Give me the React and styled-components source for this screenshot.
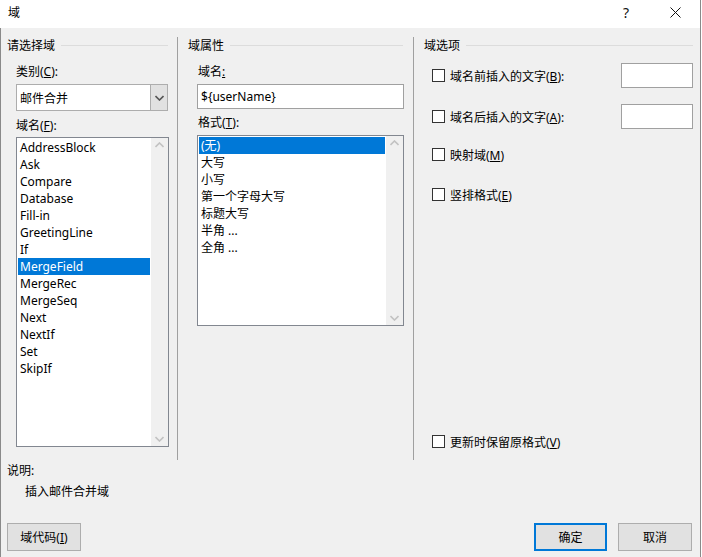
import styled, { createGlobalStyle } from "styled-components";

const GlobalStyle = createGlobalStyle`
  html, body {
    margin: 0;
    padding: 0;
    background: #ffffff;
  }
  body {
    font-family: "Noto Sans", "Noto Sans CJK SC", sans-serif;
    font-size: 12px;
    color: #000;
  }
`;

const Window = styled.div`
  width: 700px;
  height: 557px;
  display: flex;
  flex-direction: column;
  background: #ffffff;
  border-right: 1px solid #8a8a8a;
  overflow: hidden;
`;

const TitleBar = styled.div`
  height: 28px;
  display: flex;
  align-items: center;
  padding-left: 8px;
  background: #ffffff;
  font-size: 12px;
  line-height: 17px;
  padding-bottom: 3px;
  box-sizing: border-box;
`;

const Title = styled.div`
  flex: 1;
`;

const TitleButton = styled.div`
  width: ${(p) => p.$w}px;
  display: flex;
  justify-content: center;
  align-items: center;
  font-size: 14px;
  color: #111;
`;

const Frame = styled.div`
  flex: 1;
  box-sizing: border-box;
  background: #f0f0f0;
  border-left: 1px solid #8a8a8a;
  display: flex;
  flex-direction: column;
`;

const Columns = styled.div`
  display: grid;
  grid-template-columns: 177px 236px 1fr;
  margin-top: 9px;
  height: 423px;
`;

const Column = styled.div`
  display: flex;
  flex-direction: column;
  border-right: ${(p) => (p.$divider ? "1px solid #a0a0a0" : "none")};
  min-width: 0;
`;

const GroupHeading = styled.div`
  display: flex;
  align-items: center;
  gap: 6px;
  height: 17px;
  line-height: 17px;
  padding: ${(p) => p.$pad};
  &::after {
    content: "";
    flex: 1;
    height: 1px;
    background: #dcdcdc;
  }
`;

const GroupBody = styled.div`
  flex: 1;
  display: flex;
  flex-direction: column;
  padding: ${(p) => p.$pad};
`;

const Label = styled.div`
  line-height: 17px;
  height: 17px;
  margin-top: ${(p) => p.$mt}px;
  margin-left: ${(p) => p.$ml || 0}px;
  white-space: nowrap;
`;

const Select = styled.div`
  margin-top: 4px;
  height: 27px;
  width: 152px;
  box-sizing: border-box;
  display: flex;
  background: #ffffff;
  border: 1px solid #adadad;
`;

const SelectValue = styled.div`
  flex: 1;
  display: flex;
  align-items: center;
  padding-left: 3px;
`;

const SelectButton = styled.div`
  width: 16px;
  display: flex;
  align-items: center;
  justify-content: center;
  background: #e1e1e1;
  border-left: 1px solid #adadad;
`;

const TextInput = styled.div`
  height: 25px;
  width: ${(p) => p.$w}px;
  box-sizing: border-box;
  margin-top: ${(p) => p.$mt || 0}px;
  background: #ffffff;
  border: 1px solid #a0a0a0;
  display: flex;
  align-items: center;
  padding-left: 3px;
`;

const ListBox = styled.div`
  margin-top: ${(p) => p.$mt}px;
  width: ${(p) => p.$w}px;
  height: ${(p) => p.$h}px;
  box-sizing: border-box;
  border: 1px solid #828790;
  background: #ffffff;
  display: flex;
`;

const ListItems = styled.div`
  flex: 1;
  padding: 1px;
  overflow: hidden;
`;

const ListItem = styled.div`
  height: 17px;
  line-height: 17px;
  padding-left: ${(p) => p.$indent}px;
  white-space: nowrap;
  background: ${(p) => (p.$selected ? "#0078d7" : "transparent")};
  color: ${(p) => (p.$selected ? "#ffffff" : "#000000")};
`;

const ScrollTrack = styled.div`
  width: 17px;
  background: #f0f0f0;
  display: flex;
  flex-direction: column;
  justify-content: space-between;
  align-items: center;
  padding: 4px 0;
  box-sizing: border-box;
`;

const OptionRow = styled.div`
  height: 25px;
  display: flex;
  align-items: center;
  margin-top: ${(p) => p.$mt}px;
`;

const CheckBox = styled.div`
  width: 13px;
  height: 13px;
  box-sizing: border-box;
  border: 1px solid #333333;
  background: #ffffff;
  margin-right: 5px;
  flex-shrink: 0;
`;

const OptionText = styled.div`
  flex: 1;
  white-space: nowrap;
`;

const BottomArea = styled.div`
  flex: 1;
  display: flex;
  flex-direction: column;
  padding: 2px 8px 6px 6px;
`;

const ButtonRow = styled.div`
  margin-top: auto;
  display: flex;
  align-items: center;
  gap: 11px;
`;

const Spacer = styled.div`
  flex: 1;
`;

const Button = styled.div`
  width: ${(p) => p.$w}px;
  height: 28px;
  box-sizing: border-box;
  display: flex;
  align-items: center;
  justify-content: center;
  background: #e1e1e1;
  border: ${(p) => (p.$default ? "2px solid #0078d7" : "1px solid #adadad")};
`;

const Chevron = ({ up, color = "#c2c2c2" }) => (
  <svg width="9" height="6" viewBox="0 0 9 6">
    <path
      d={up ? "M0.5 5 L4.5 1 L8.5 5" : "M0.5 1 L4.5 5 L8.5 1"}
      fill="none"
      stroke={color}
      strokeWidth="1.6"
    />
  </svg>
);

const CloseIcon = () => (
  <svg width="11" height="11" viewBox="0 0 11 11">
    <path d="M0.5 0.5 L10.5 10.5 M10.5 0.5 L0.5 10.5" stroke="#111" strokeWidth="1" fill="none" />
  </svg>
);

const Scrollbar = () => (
  <ScrollTrack>
    <Chevron up />
    <Chevron />
  </ScrollTrack>
);

const fieldNames = [
  "AddressBlock",
  "Ask",
  "Compare",
  "Database",
  "Fill-in",
  "GreetingLine",
  "If",
  "MergeField",
  "MergeRec",
  "MergeSeq",
  "Next",
  "NextIf",
  "Set",
  "SkipIf",
];

const formats = ["(无)", "大写", "小写", "第一个字母大写", "标题大写", "半角 ...", "全角 ..."];

const App = () => {
  return (
    <>
      <GlobalStyle />
      <Window>
        <TitleBar>
          <Title>域</Title>
          <TitleButton $w={48}>?</TitleButton>
          <TitleButton $w={50}>
            <CloseIcon />
          </TitleButton>
        </TitleBar>
        <Frame>
          <Columns>
            <Column $divider>
              <GroupHeading $pad="0 9px 0 6px">请选择域</GroupHeading>
              <GroupBody $pad="0 0 0 15px">
                <Label $mt={9}>
                  类别(<u>C</u>):
                </Label>
                <Select>
                  <SelectValue>邮件合并</SelectValue>
                  <SelectButton>
                    <Chevron color="#555" />
                  </SelectButton>
                </Select>
                <Label $mt={6}>
                  域名(<u>F</u>):
                </Label>
                <ListBox $mt={3} $w={153} $h={310}>
                  <ListItems>
                    {fieldNames.map((name) => (
                      <ListItem key={name} $indent={2} $selected={name === "MergeField"}>
                        {name}
                      </ListItem>
                    ))}
                  </ListItems>
                  <Scrollbar />
                </ListBox>
              </GroupBody>
            </Column>
            <Column $divider>
              <GroupHeading $pad="0 10px 0 10px">域属性</GroupHeading>
              <GroupBody $pad="0 9px 0 19px">
                <Label $mt={9} $ml={1}>
                  域名<u>:</u>
                </Label>
                <TextInput $w={207} $mt={4}>
                  ${"{"}userName{"}"}
                </TextInput>
                <Label $mt={5} $ml={1}>
                  格式(<u>T</u>):
                </Label>
                <ListBox $mt={4} $w={207} $h={191}>
                  <ListItems>
                    {formats.map((f, i) => (
                      <ListItem key={f} $indent={2} $selected={i === 0}>
                        {f}
                      </ListItem>
                    ))}
                  </ListItems>
                  <Scrollbar />
                </ListBox>
              </GroupBody>
            </Column>
            <Column>
              <GroupHeading $pad="0 7px 0 10px">域选项</GroupHeading>
              <GroupBody $pad="0 7px 6px 18px">
                <OptionRow $mt={9}>
                  <CheckBox />
                  <OptionText>
                    域名前插入的文字(<u>B</u>):
                  </OptionText>
                  <TextInput $w={72} />
                </OptionRow>
                <OptionRow $mt={16}>
                  <CheckBox />
                  <OptionText>
                    域名后插入的文字(<u>A</u>):
                  </OptionText>
                  <TextInput $w={72} />
                </OptionRow>
                <OptionRow $mt={13}>
                  <CheckBox />
                  <OptionText>
                    映射域(<u>M</u>)
                  </OptionText>
                </OptionRow>
                <OptionRow $mt={15}>
                  <CheckBox />
                  <OptionText>
                    竖排格式(<u>E</u>)
                  </OptionText>
                </OptionRow>
                <Spacer />
                <OptionRow $mt={0}>
                  <CheckBox />
                  <OptionText>
                    更新时保留原格式(<u>V</u>)
                  </OptionText>
                </OptionRow>
              </GroupBody>
            </Column>
          </Columns>
          <BottomArea>
            <Label $mt={0}>说明:</Label>
            <Label $mt={4} $ml={18}>
              插入邮件合并域
            </Label>
            <ButtonRow>
              <Button $w={74}>
                域代码(<u>I</u>)
              </Button>
              <Spacer />
              <Button $w={73} $default>
                确定
              </Button>
              <Button $w={74}>取消</Button>
            </ButtonRow>
          </BottomArea>
        </Frame>
      </Window>
    </>
  );
};

export default App;
